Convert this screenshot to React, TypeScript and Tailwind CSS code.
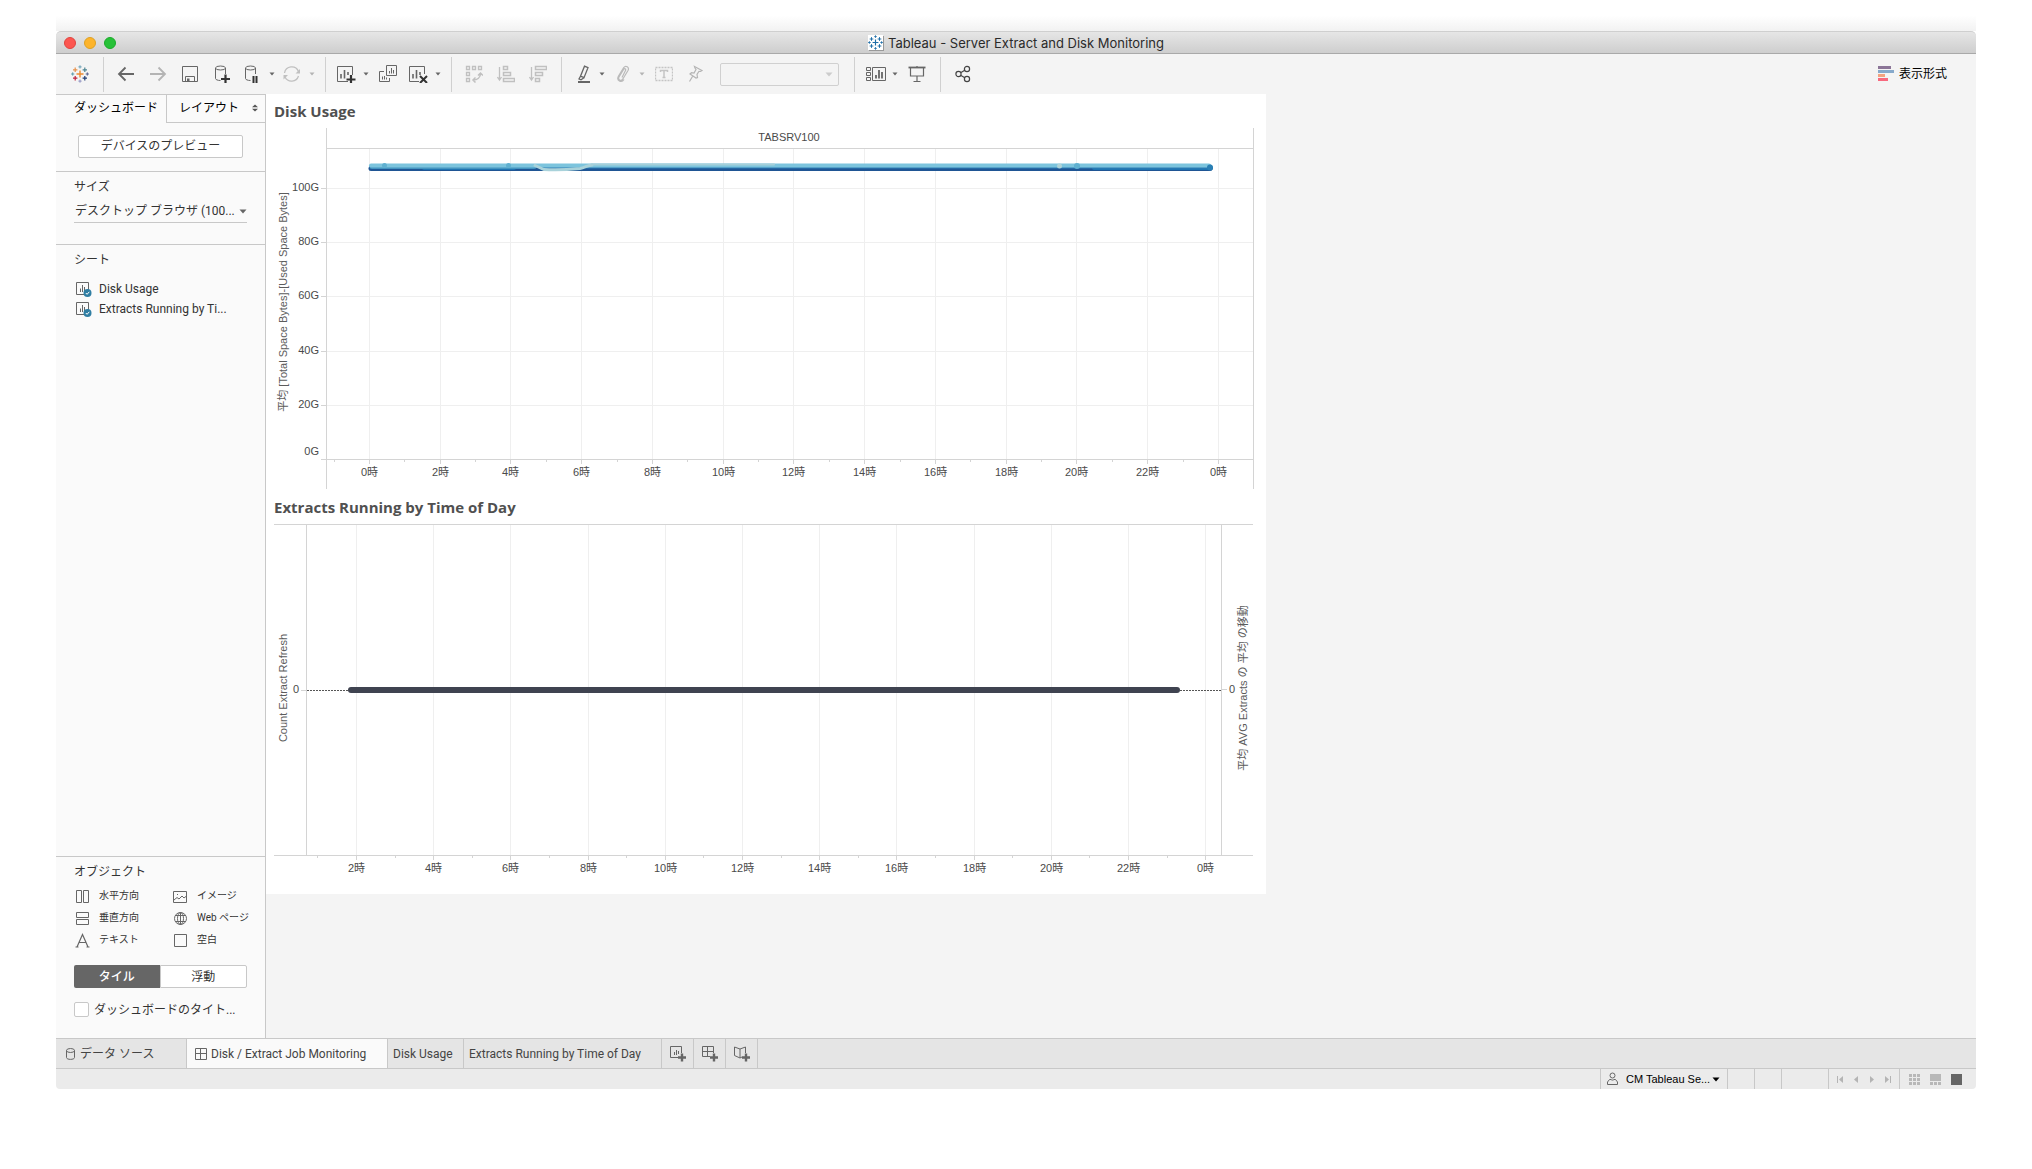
import React from 'react';

type IconProps = { children: React.ReactNode; w?: number; h?: number; color?: string };

const Icon = ({ children, w = 18, h = 18, color = '#666666' }: IconProps) => (
  <svg width={w} height={h} viewBox={`0 0 ${w} ${h}`} fill="none" stroke={color} aria-hidden="true" className="shrink-0">
    {children}
  </svg>
);

const Caret = ({ color = '#666666' }: { color?: string }) => (
  <svg width="6" height="4" viewBox="0 0 6 4" fill={color} aria-hidden="true">
    <path d="M0.5 0.5h5L3 3.5z" />
  </svg>
);

const WideCaret = ({ color }: { color: string }) => (
  <svg width="8" height="5" viewBox="0 0 8 5" fill={color} aria-hidden="true">
    <path d="M0.5 0.5h7L4 4.5z" />
  </svg>
);

// Tableau mark, one colour per cross
const TableauMark = ({ size, colors }: { size: number; colors: string[] }) => {
  const crosses = [
    [9, 9, 3.5, 1.4],
    [4.2, 4.8, 2.2, 1.2],
    [13.8, 4.8, 2.2, 1.2],
    [4.2, 13.2, 2.2, 1.2],
    [13.8, 13.2, 2.2, 1.2],
    [9, 1.9, 1.6, 1],
    [9, 16.1, 1.6, 1],
    [1.7, 9, 1.6, 1],
    [16.3, 9, 1.6, 1],
  ];
  return (
    <svg width={size} height={size} viewBox="0 0 18 18" aria-hidden="true">
      {crosses.map(([x, y, r, sw], i) => (
        <path key={i} d={`M${x - r} ${y}h${r * 2}M${x} ${y - r}v${r * 2}`} stroke={colors[i]} strokeWidth={sw} />
      ))}
    </svg>
  );
};

const logoColors = ['#eb8a2f', '#e8914a', '#4c8592', '#c0233c', '#1f3c74', '#6ba0b5', '#8f92c2', '#5b9bab', '#54618f'];
const blueColors = Array(9).fill('#1f6fa8');

const ToolButton = ({ label, slim, children }: { label: string; slim?: boolean; children: React.ReactNode }) => (
  <button type="button" aria-label={label} className={`${slim ? 'w-7' : 'w-8'} flex h-8 shrink-0 items-center justify-center`}>
    {children}
  </button>
);

const CaretButton = ({ label, color }: { label: string; color?: string }) => (
  <button type="button" aria-label={label} className="flex h-8 w-3 shrink-0 items-center justify-center">
    <Caret color={color} />
  </button>
);

const ToolGroup = ({ children }: { children: React.ReactNode }) => (
  <div className="flex h-[35px] items-center border-r border-[#d0d0d0] pl-[6px] pr-[7px]">{children}</div>
);

const Toolbar = () => (
  <div className="flex h-10 items-center bg-[#f4f4f4]">
    <div className="flex h-[35px] w-12 items-center justify-center border-r border-[#d0d0d0]">
      <button type="button" aria-label="スタート ページ">
        <TableauMark size={18} colors={logoColors} />
      </button>
    </div>
    <ToolGroup>
      <ToolButton label="元に戻す">
        <Icon><path d="M17 9H2M8.5 2.5L2 9l6.5 6.5" strokeWidth="1.8" /></Icon>
      </ToolButton>
      <ToolButton label="やり直し">
        <Icon color="#b4b4b4"><path d="M1 9h15M9.5 2.5L16 9l-6.5 6.5" strokeWidth="1.8" /></Icon>
      </ToolButton>
      <ToolButton label="保存">
        <Icon>
          <path d="M1.5 1.5h15v15h-15zM4.5 16.5v-5h9v5" />
          <path d="M6 13.5h2.5v3H6z" fill="#666666" stroke="none" />
        </Icon>
      </ToolButton>
      <ToolButton label="新しいデータ ソース">
        <Icon>
          <path d="M2.5 3v10.5c0 1 2 2 5 2M12.5 3v6" />
          <ellipse cx="7.5" cy="3" rx="5" ry="2" />
          <path d="M8 14h9M12.5 9.5v9" stroke="#333333" strokeWidth="2.2" />
        </Icon>
      </ToolButton>
      <ToolButton label="自動更新の一時停止" slim>
        <Icon>
          <path d="M2.5 3v10.5c0 1 2 2 5 2M12.5 3v6" />
          <ellipse cx="7.5" cy="3" rx="5" ry="2" />
          <path d="M10.5 11v7M13.5 11v7" stroke="#333333" strokeWidth="2" />
        </Icon>
      </ToolButton>
      <CaretButton label="自動更新メニュー" />
      <ToolButton label="更新の実行" slim>
        <Icon color="#c0c0c0">
          <path d="M1.5 8A7.3 7.3 0 0 1 15.5 6.5M15.5 11A7.3 7.3 0 0 1 2 12" strokeWidth="1.3" />
          <path d="M17 4v4.5h-4.5zM0.5 14.5V10H5z" fill="#c0c0c0" stroke="none" />
        </Icon>
      </ToolButton>
      <CaretButton label="更新メニュー" color="#b4b4b4" />
    </ToolGroup>
    <ToolGroup>
      <ToolButton label="新しいワークシート" slim>
        <Icon w={20}>
          <path d="M12 16.5H1.5v-15h15V10" />
          <path d="M5 13.5V9M8.5 13.5V5M12 10V7" strokeWidth="1.6" />
          <path d="M10.5 14.5h9M15 10v8" stroke="#333333" strokeWidth="2.2" />
        </Icon>
      </ToolButton>
      <CaretButton label="新しいワークシート メニュー" />
      <ToolButton label="複製">
        <Icon>
          <path d="M7.5 0.5h10v10h-10zM5 6.5H0.5v10h10V13" />
          <path d="M10.5 8.5V6M12.5 8.5V3M14.5 8.5V5M3.5 14.5v-3M5.5 14.5V11M7.5 14.5v-2" />
        </Icon>
      </ToolButton>
      <ToolButton label="シートのクリア" slim>
        <Icon w={20}>
          <path d="M11 16.5H1.5v-15h15V9" />
          <path d="M5 13.5V9M8.5 13.5V5M12 10V7" strokeWidth="1.6" />
          <path d="M12 11l7 7M19 11l-7 7" stroke="#333333" strokeWidth="2" />
        </Icon>
      </ToolButton>
      <CaretButton label="クリア メニュー" />
    </ToolGroup>
    <ToolGroup>
      <ToolButton label="行と列の交換">
        <Icon color="#c0c0c0">
          <path d="M1.5 1.5h3v3h-3zM7.5 1.5h3v3h-3zM13.5 1.5h3v3h-3zM1.5 7.5h3v3h-3zM1.5 13.5h3v3h-3z" strokeWidth="1.3" />
          <path d="M15.5 8.5c0 4-3 6.5-7.5 6.5M13 10.5L15.5 8l2.5 2.5M10.5 12.5L8 15l2.5 2.5" strokeWidth="1.5" />
        </Icon>
      </ToolButton>
      <ToolButton label="昇順で並べ替え">
        <Icon color="#c0c0c0">
          <path d="M2.5 2v13M0.5 12l2 3 2-3" strokeWidth="1.3" />
          <path d="M6.5 1.5h4v3h-4zM6.5 7.5h7v3h-7zM6.5 13.5h11v3h-11z" strokeWidth="1.5" />
        </Icon>
      </ToolButton>
      <ToolButton label="降順で並べ替え">
        <Icon color="#c0c0c0">
          <path d="M2.5 2v13M0.5 12l2 3 2-3" strokeWidth="1.3" />
          <path d="M6.5 1.5h11v3h-11zM6.5 7.5h7v3h-7zM6.5 13.5h4v3h-4z" strokeWidth="1.5" />
        </Icon>
      </ToolButton>
    </ToolGroup>
    <div className="flex h-[35px] items-center border-r border-[#d0d0d0] pl-[6px] pr-[15px]">
      <ToolButton label="ハイライト" slim>
        <Icon>
          <path d="M11.5 1.2L15 2.7l-4 10-3.5-1.5zM7.5 11.2L6 14l2 .8 3-2" strokeWidth="1.3" />
          <path d="M5 17h12" strokeWidth="2" />
        </Icon>
      </ToolButton>
      <CaretButton label="ハイライト メニュー" />
      <ToolButton label="メンバーのグループ化" slim>
        <Icon color="#bababa">
          <path d="M9 12.5l3.5-7c.8-1.5-1-2.500-1.900-1L6 12c-1.300 2.600 1.800 4.800 3.700 2.200L15 5.500c1.700-3-2.200-5.800-4.300-2.800L5.500 11c-2.500 4.500 3 7.500 5.500 3.500" strokeWidth="1.2" />
        </Icon>
      </ToolButton>
      <CaretButton label="グループ メニュー" color="#b4b4b4" />
      <ToolButton label="マーク ラベルの表示">
        <Icon color="#c4c4c4">
          <path d="M0.5 2.5h17v13h-17z" strokeDasharray="2 1" strokeWidth="1.3" />
          <path d="M5.5 7V5.5h7V7M9 5.5v7M7.5 12.5h3" strokeWidth="1.5" />
        </Icon>
      </ToolButton>
      <ToolButton label="軸の固定">
        <Icon color="#b4b4b4">
          <path d="M7.5 1.5l7.5 4-1.500 1-1.500-.2-2 3.200.5 3-1.500.5-6-4 1.500-1.300 2.500.3 2-3.500-1-1.500zM5.500 11.500L2.500 16.500" strokeWidth="1.2" />
        </Icon>
      </ToolButton>
      <div className="relative ml-2">
        <select aria-label="適合" className="block h-[23px] w-[119px] appearance-none rounded-[2px] border border-[#d0d0d0] bg-[#f4f4f4]" />
        <span className="pointer-events-none absolute right-[6px] top-[9px]">
          <WideCaret color="#cccccc" />
        </span>
      </div>
    </div>
    <ToolGroup>
      <ToolButton label="カードの表示" slim>
        <Icon w={22}>
          <path d="M8.5 2.5h13v13h-13zM2.5 2.5h4v3h-4zM2.5 7.5h4v3h-4zM2.5 12.5h4v3h-4z" />
          <path d="M12 13.5V10M15 13.5V5M18 13.5V7" strokeWidth="1.8" />
        </Icon>
      </ToolButton>
      <CaretButton label="カード メニュー" />
      <ToolButton label="プレゼンテーション モード">
        <Icon>
          <path d="M0.5 2.5h17" strokeWidth="1.8" />
          <path d="M2.5 2.5V11h13V2.5M9 11v5.5M9 1v1M5.5 16.5h7" strokeWidth="1.2" />
        </Icon>
      </ToolButton>
    </ToolGroup>
    <div className="pl-[6px]">
      <ToolButton label="共有">
        <Icon color="#444444">
          <circle cx="4.5" cy="9" r="2.6" strokeWidth="1.2" />
          <circle cx="13" cy="4" r="2.6" strokeWidth="1.2" />
          <circle cx="13" cy="14" r="2.6" strokeWidth="1.2" />
          <path d="M7 7.5l3.800-2.200M7 10.500l3.800 2.200" strokeWidth="1.2" />
        </Icon>
      </ToolButton>
    </div>
    <button type="button" className="ml-auto mr-[29px] flex items-center gap-[5px] text-[12px] text-black">
      <svg width="16" height="16" viewBox="0 0 16 16" aria-hidden="true">
        <path d="M0 0h13v3H0z" fill="#8b7597" />
        <path d="M0 4h16v3H0z" fill="#86a9cb" />
        <path d="M0 8h7v3H0z" fill="#f3a380" />
        <path d="M0 12h10v3H0z" fill="#f8697e" />
      </svg>
      表示形式
    </button>
  </div>
);

const sheets = ['Disk Usage', 'Extracts Running by Ti...'];

const objects = [
  { name: '水平方向', icon: <path d="M1.5 1.5h5v12h-5zM8.5 1.5h5v12h-5z" /> },
  {
    name: 'イメージ',
    icon: <path d="M0.5 2.5h13v11h-13zM1 11l3-2.5L6 10l3-3 2 2 2.5-2M4 5.5h1" />,
  },
  { name: '垂直方向', icon: <path d="M1.5 1.5h12v5h-12zM1.5 8.5h12v5h-12z" /> },
  {
    name: 'Web ページ',
    icon: (
      <>
        <circle cx="7.5" cy="7.5" r="6" />
        <ellipse cx="7.5" cy="7.5" rx="3" ry="6" />
        <path d="M7.5 1.5v12M2.3 4.5h10.4M2.3 10.5h10.4" />
      </>
    ),
  },
  { name: 'テキスト', icon: <path d="M2 14L7.5 1.5 13 14M4 9.5h7M0.5 14h3M11.5 14h3" strokeWidth="1.2" /> },
  { name: '空白', icon: <path d="M1.5 1.5h12v12h-12z" /> },
];

const Sidebar = () => (
  <aside className="flex w-[210px] shrink-0 flex-col border-r border-t border-[#c8c8c8] bg-[#fafafa] text-[12px] leading-4 text-[#333333]">
    <div className="flex h-7 text-black">
      <button type="button" className="w-[110px] pb-[3px] pl-[18px] text-left">ダッシュボード</button>
      <button type="button" className="flex flex-1 items-center justify-between border-b border-l border-[#c8c8c8] pb-[2px] pl-3 pr-[7px]">
        レイアウト
        <svg width="6" height="8" viewBox="0 0 6 8" fill="#555555" aria-hidden="true">
          <path d="M0 3.3L3 0.5 6 3.3zM0 4.7L3 7.5 6 4.7z" />
        </svg>
      </button>
    </div>
    <button type="button" className="mx-[22px] mb-[13px] mt-3 h-[23px] rounded-[2px] border border-[#c8c8c8] bg-white pb-[2px]">
      デバイスのプレビュー
    </button>

    <section className="border-t border-[#c8c8c8] px-[18px] pb-[21px] pt-[7px]">
      <label htmlFor="size">サイズ</label>
      <div className="relative mt-1">
        <select id="size" className="h-6 w-full appearance-none border-b border-[#c8c8c8] bg-transparent pl-px">
          <option>デスクトップ ブラウザ (100...</option>
        </select>
        <span className="pointer-events-none absolute right-0 top-2 flex h-2 items-center">
          <WideCaret color="#666666" />
        </span>
      </div>
    </section>

    <section className="border-t border-[#c8c8c8] pt-[7px]">
      <h2 className="px-[18px]">シート</h2>
      <ul className="mt-[11px]">
        {sheets.map((sheet) => (
          <li key={sheet}>
            <button type="button" className="flex h-5 items-center gap-[7px] pl-5">
              <Icon w={16} h={16}>
                <path d="M0.5 1.5h12v12h-12z" />
                <path d="M4.5 11V7.5M6.5 11V4M8.5 11V6" />
                <circle cx="11.5" cy="12" r="4" fill="#2f7ea3" stroke="none" />
                <path d="M9.8 12l1.3 1.3 2.2-2.5" stroke="#ffffff" />
              </Icon>
              {sheet}
            </button>
          </li>
        ))}
      </ul>
    </section>

    <section className="mt-auto border-t border-[#c8c8c8] pb-[21px] pt-[7px]">
      <h2 className="px-[18px]">オブジェクト</h2>
      <ul className="mt-[5px] grid grid-cols-[98px_1fr] pl-[19px] text-[10px]">
        {objects.map((object) => (
          <li key={object.name}>
            <button type="button" className="flex h-[22px] items-center gap-[9px]">
              <Icon w={15} h={15}>{object.icon}</Icon>
              {object.name}
            </button>
          </li>
        ))}
      </ul>
      <div className="mx-[18px] mt-[14px] flex h-[23px]">
        <button type="button" className="flex-1 rounded-l-[2px] bg-[#666666] font-medium text-white">タイル</button>
        <button type="button" className="flex-1 rounded-r-[2px] border border-[#c8c8c8] bg-white">浮動</button>
      </div>
      <label className="mx-[18px] mt-[14px] flex h-[15px] items-center gap-[5px]">
        <input type="checkbox" className="size-[15px] appearance-none rounded-[2px] border border-[#c8c8c8] bg-white" />
        ダッシュボードのタイト...
      </label>
    </section>
  </aside>
);

// x of an hour tick inside each plot
const diskX = (hour: number) => Math.round(94.9 + hour * 35.375) + 0.5;
const extractX = (hour: number) => Math.round(82 + (hour - 2) * 38.6) + 0.5;
const gigabytes = [
  { label: '100G', y: 60.5 },
  { label: '80G', y: 114.5 },
  { label: '60G', y: 168.5 },
  { label: '40G', y: 223.5 },
  { label: '20G', y: 277.5 },
];

const DiskUsageChart = () => (
  <svg viewBox="0 0 980 362" className="block w-full text-[11px]" fill="#4a4a4a" role="img" aria-label="Disk Usage">
    <g stroke="#efefef">
      {gigabytes.map(({ y }) => <path key={y} d={`M53 ${y}H979`} />)}
      {Array.from({ length: 13 }, (_, i) => <path key={i} d={`M${diskX(i * 2)} 21V331`} />)}
    </g>
    <g stroke="#d4d4d4">
      <path d="M52.5 0V361M979.5 0V361M52 20.5H979M47 331.5H979" />
      {gigabytes.map(({ y }) => <path key={y} d={`M47 ${y}H52`} />)}
      {Array.from({ length: 13 }, (_, i) => <path key={i} d={`M${diskX(i * 2)} 332v4`} />)}
      {Array.from({ length: 13 }, (_, i) => <path key={i} d={`M${diskX(i * 2 - 1)} 332v2`} />)}
    </g>

    <g fill="none" strokeLinecap="round">
      <path d="M97 40.5H936" stroke="#1f5594" strokeWidth="5" />
      <path d="M150 40H240M820 40H937" stroke="#1f74b1" strokeWidth="4" />
      <path d="M98 38.5H260" stroke="#4394c0" strokeWidth="5" />
      <path d="M270 38.5H936" stroke="#2f7fb5" strokeWidth="4" />
      <path d="M97 37.5H935" stroke="#7cc4dd" strokeWidth="4" />
      <path d="M261 37.5l9 4c14 1 26 0 36-1 5-1 8-3.5 12-3.5" stroke="#a9d2da" strokeWidth="3" />
      <path d="M318 36.5H500" stroke="#a5d0d9" strokeWidth="2" />
    </g>
    <circle cx="110.5" cy="37.5" r="2.5" fill="#5fb0d0" />
    <circle cx="234.5" cy="37.5" r="2.5" fill="#5fb0d0" />
    <circle cx="785.5" cy="38" r="2.5" fill="#b0d4d8" />
    <circle cx="803" cy="38" r="3" fill="#5fb0d0" />
    <circle cx="936" cy="39.5" r="3" fill="#2a7fb4" />

    <text x="515" y="13" textAnchor="middle">TABSRV100</text>
    <g textAnchor="end">
      {gigabytes.map(({ label, y }) => <text key={label} x="45" y={y + 2.5}>{label}</text>)}
      <text x="45" y="327">0G</text>
    </g>
    <g textAnchor="middle">
      {Array.from({ length: 13 }, (_, i) => (
        <text key={i} x={diskX(i * 2)} y="348">{(i * 2) % 24}時</text>
      ))}
    </g>
    <text transform="translate(13 174) rotate(-90)" textAnchor="middle" fill="#5c5c5c">
      平均 [Total Space Bytes]-[Used Space Bytes]
    </text>
  </svg>
);

const ExtractsChart = () => (
  <svg viewBox="0 0 980 356" className="block w-full text-[11px]" fill="#4a4a4a" role="img" aria-label="Extracts Running by Time of Day">
    <g stroke="#efefef">
      {Array.from({ length: 12 }, (_, i) => <path key={i} d={`M${extractX(i * 2 + 2)} 1V331`} />)}
    </g>
    <g stroke="#d4d4d4">
      <path d="M0 0.5H979M0 331.5H979M32.5 0V331M947.5 0V331M27 166.5H32M948 165.5h5" />
      {Array.from({ length: 12 }, (_, i) => <path key={i} d={`M${extractX(i * 2 + 2)} 332v4`} />)}
      {Array.from({ length: 12 }, (_, i) => <path key={i} d={`M${extractX(i * 2 + 1)} 332v2`} />)}
    </g>
    <path d="M33 166.5H947" stroke="#555555" strokeDasharray="2 1" />
    <path d="M77 166H903" stroke="#3f4350" strokeWidth="6" strokeLinecap="round" />
    <text x="25" y="169" textAnchor="end">0</text>
    <text x="955" y="169">0</text>
    <g textAnchor="middle">
      {Array.from({ length: 12 }, (_, i) => (
        <text key={i} x={extractX(i * 2 + 2)} y="348">{(i * 2 + 2) % 24}時</text>
      ))}
    </g>
    <text transform="translate(13 164) rotate(-90)" textAnchor="middle" fill="#5c5c5c">Count Extract Refresh</text>
    <text transform="translate(973 164) rotate(-90)" textAnchor="middle" fill="#5c5c5c">平均 AVG Extracts の 平均 の移動</text>
  </svg>
);

const SheetTitle = ({ children }: { children: React.ReactNode }) => (
  <h2 className="flex h-[34px] items-center font-['Open_Sans',sans-serif] text-[15px] font-bold text-[#505050]">{children}</h2>
);

const Dashboard = () => (
  <div className="h-[800px] w-[1000px] bg-white pl-2 pr-3 font-['Liberation_Sans','Noto_Sans_CJK_JP',sans-serif]">
    <SheetTitle>Disk Usage</SheetTitle>
    <DiskUsageChart />
    <SheetTitle>Extracts Running by Time of Day</SheetTitle>
    <ExtractsChart />
  </div>
);

const plus = <path d="M8 11.5h8M12 7.5v8" strokeWidth="2.4" />;

const SheetTabs = () => (
  <nav className="flex h-[31px] border-b border-t border-[#c8c8c8] bg-[#e5e5e5] text-[12px] text-[#444444]">
    <button type="button" className="flex w-[131px] items-center gap-[5px] border-r border-[#c8c8c8] pl-[10px]">
      <Icon w={9} h={12}>
        <path d="M0.5 2.5v7c0 2.5 8 2.5 8 0v-7" />
        <ellipse cx="4.5" cy="2.5" rx="4" ry="2" />
      </Icon>
      データ ソース
    </button>
    <button type="button" className="flex w-[201px] items-center gap-1 border-r border-[#c8c8c8] bg-[#fafafa] pl-2">
      <Icon w={12} h={12}><path d="M0.5 0.5h11v11h-11zM5.5 0.5v11M0.5 5.5h11" /></Icon>
      Disk / Extract Job Monitoring
    </button>
    <button type="button" className="w-[76px] border-r border-[#c8c8c8] pl-[5px] text-left">Disk Usage</button>
    <button type="button" className="w-[198px] border-r border-[#c8c8c8] pl-[5px] text-left">Extracts Running by Time of Day</button>
    <button type="button" aria-label="新しいワークシート" className="flex w-8 items-center justify-center border-r border-[#c8c8c8]">
      <Icon w={16} h={16}><path d="M8 11.5H0.5v-11h11V7M4.5 9V6M6.5 9V4M8.5 8V5" />{plus}</Icon>
    </button>
    <button type="button" aria-label="新しいダッシュボード" className="flex w-8 items-center justify-center border-r border-[#c8c8c8]">
      <Icon w={16} h={16}><path d="M8 10.5H0.5v-10h11V7M5.5 0.5v10M0.5 5.5h11" />{plus}</Icon>
    </button>
    <button type="button" aria-label="新しいストーリー" className="flex w-8 items-center justify-center border-r border-[#c8c8c8]">
      <Icon w={16} h={16}><path d="M6 12L0.5 9.5V1L6 3l5.5-2v6M6 3v9l2-1" />{plus}</Icon>
    </button>
  </nav>
);

const navButtons = [
  { label: '最初のシート', d: 'M1.5 1v7', fill: 'M7 1v7L3 4.5z' },
  { label: '前のシート', d: '', fill: 'M6 1v7L2 4.5z' },
  { label: '次のシート', d: '', fill: 'M2 1v7l4-3.5z' },
  { label: '最後のシート', d: 'M6.5 1v7', fill: 'M1 1v7l4-3.5z' },
];

const StatusBar = () => (
  <footer className="flex h-5 justify-end rounded-b-[4px] bg-[#ebebeb]">
    <div className="relative flex w-[127px] items-center border-l border-[#c8c8c8] pl-[6px]">
      <Icon w={11} h={14}>
        <circle cx="5.5" cy="3.5" r="2.5" />
        <path d="M0.5 12.5V10l2-2.5H4c1 .8 2 .8 3 0h1.5l2 2.5v2.5z" />
      </Icon>
      <select aria-label="ユーザー フィルター" className="ml-2 h-5 w-[98px] appearance-none bg-transparent font-['Liberation_Sans',sans-serif] text-[11px] text-black">
        <option>CM Tableau Se...</option>
      </select>
      <span className="pointer-events-none absolute right-[7px] top-0 flex h-5 items-center">
        <WideCaret color="#000000" />
      </span>
    </div>
    <div className="w-[27px] border-l border-[#c8c8c8]" />
    <div className="w-[27px] border-l border-[#c8c8c8]" />
    <div className="w-[47px] border-l border-[#c8c8c8]" />
    <div className="flex w-[71px] items-center justify-between border-l border-[#c8c8c8] px-[7px]">
      {navButtons.map(({ label, d, fill }) => (
        <button type="button" key={label} aria-label={label}>
          <Icon w={8} h={9} color="#b4b4b4">
            <path d={d} />
            <path d={fill} fill="#b4b4b4" stroke="none" />
          </Icon>
        </button>
      ))}
    </div>
    <div className="flex w-[77px] items-center gap-[10px] border-l border-[#c8c8c8] pl-[9px]">
      <button type="button" aria-label="シート ソーター">
        <Icon w={11} h={11} color="#b8b8b8"><path d="M0 1.5h11M0 5.5h11M0 9.5h11" strokeWidth="3" strokeDasharray="3 1" /></Icon>
      </button>
      <button type="button" aria-label="フィルムストリップ">
        <Icon w={11} h={11} color="#b8b8b8">
          <path d="M0 3.5h11" strokeWidth="7" />
          <path d="M0 9.5h11" strokeWidth="3" strokeDasharray="3 1" />
        </Icon>
      </button>
      <button type="button" aria-label="タブ表示" className="size-[11px] bg-[#666666]" />
    </div>
  </footer>
);

const App = () => (
  <div className="flex min-h-screen flex-col bg-white px-14 pb-20 font-['Roboto','Noto_Sans_CJK_JP',sans-serif]">
    <div className="h-[31px] bg-gradient-to-b from-white via-white to-[#f2f2f2]" />
    <div className="flex flex-1 flex-col">
      <header className="grid h-[23px] grid-cols-[1fr_auto_1fr] items-center rounded-t-[5px] border-b border-t border-b-[#a9a9a9] border-t-[#cfcfcf] bg-gradient-to-b from-[#e6e6e6] to-[#cecece]">
        <div className="flex gap-2 pl-2">
          <button type="button" aria-label="閉じる" className="size-3 rounded-full border border-[#e0443e] bg-[#fc5650]" />
          <button type="button" aria-label="しまう" className="size-3 rounded-full border border-[#dea123] bg-[#fdb42b]" />
          <button type="button" aria-label="拡大" className="size-3 rounded-full border border-[#1aab29] bg-[#27c138]" />
        </div>
        <div className="flex items-center gap-[5px]">
          <span className="flex size-[15px] items-center justify-center bg-white shadow-[1px_1px_0_#999999]">
            <TableauMark size={15} colors={blueColors} />
          </span>
          <h1 className="font-['Inter',sans-serif] text-[13px] leading-4 text-[#2a2a2a]">Tableau - Server Extract and Disk Monitoring</h1>
        </div>
      </header>
      <Toolbar />
      <div className="flex flex-1">
        <Sidebar />
        <main className="min-w-0 flex-1 bg-[#f4f4f4]">
          <Dashboard />
        </main>
      </div>
      <SheetTabs />
      <StatusBar />
    </div>
  </div>
);

export default App;
